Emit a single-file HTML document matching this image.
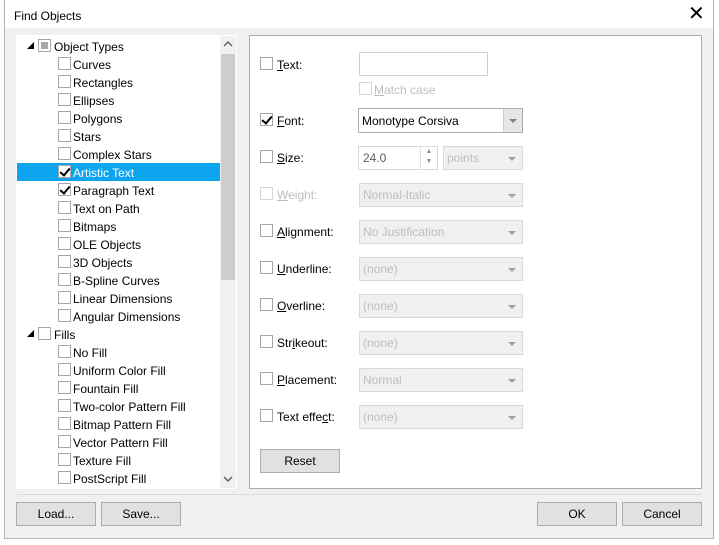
<!DOCTYPE html>
<html><head><style>
*{margin:0;padding:0;box-sizing:border-box}
body{width:719px;height:545px;background:#fff;position:relative;overflow:hidden;font-family:"Liberation Sans",sans-serif;font-size:12px;color:#000}
.a{position:absolute}
.win{left:4px;top:0;width:710px;height:539px;border:1px solid #b4b4b4;border-top:none;background:#f0f0f0}
.title{left:5px;top:0;width:708px;height:28px;background:#fff}
.cb{position:absolute;width:13px;height:13px;border:1px solid #a6a6a6;background:#fff}
.cb.dis{border-color:#d6d6d6}
.ck::after{content:"";position:absolute;left:3px;top:0px;width:4px;height:8px;border:solid #000;border-width:0 2px 2px 0;transform:rotate(40deg)}
.row{position:absolute;left:17px;width:203px;height:18px;line-height:18px;white-space:nowrap}
.row .cb{top:2px}
.row span.t{position:absolute;left:56px;top:1px}
.sel{background:#0ea5ef;color:#fff}
.lbl{position:absolute;white-space:nowrap;line-height:16px}
.dd{position:absolute;left:359px;width:164px;height:24px;border:1px solid #d9d9d9;background:#f0f0f0;color:#bdbdbd;padding-left:3px;line-height:23px}
.dd::after{content:"";position:absolute;right:6px;top:10px;border:4px solid transparent;border-top:4px solid #a0a0a0;border-bottom:0;width:0;height:0}
.btn{position:absolute;height:24px;border:1px solid #adadad;background:#e1e1e1;text-align:center;line-height:23px}
u{text-decoration:underline}
</style></head><body>
<div class="a win"></div>
<div class="a title"></div>
<div class="a" style="left:14px;top:9px">Find Objects</div>
<div class="a" style="left:688px;top:2px;font-size:20px;line-height:24px">✕</div>

<!-- tree -->
<div class="a" style="left:16px;top:35px;width:221px;height:454px;background:#fff"></div>
<div class="a" style="left:220px;top:36px;width:16px;height:452px;background:#f0f0f0"></div>
<div class="a" style="left:221px;top:54px;width:14px;height:226px;background:#cdcdcd"></div>
<svg class="a" style="left:223px;top:40px" width="10" height="8"><path d="M1 6 L5 2 L9 6" fill="none" stroke="#606060" stroke-width="1.5"/></svg>
<svg class="a" style="left:223px;top:475px" width="10" height="8"><path d="M1 2 L5 6 L9 2" fill="none" stroke="#606060" stroke-width="1.5"/></svg>

<div class="row" style="top:37px"><span class="a" style="left:10px;top:5px;border-left:7px solid transparent;border-bottom:7px solid #000;width:0;height:0"></span><span class="cb" style="left:21px"><span class="a" style="left:2px;top:2px;width:7px;height:7px;background:#a8a8a8"></span></span><span class="a" style="left:37px;top:1px">Object Types</span></div>
<div class="row" style="top:55px"><span class="cb" style="left:41px"></span><span class="t">Curves</span></div>
<div class="row" style="top:73px"><span class="cb" style="left:41px"></span><span class="t">Rectangles</span></div>
<div class="row" style="top:91px"><span class="cb" style="left:41px"></span><span class="t">Ellipses</span></div>
<div class="row" style="top:109px"><span class="cb" style="left:41px"></span><span class="t">Polygons</span></div>
<div class="row" style="top:127px"><span class="cb" style="left:41px"></span><span class="t">Stars</span></div>
<div class="row" style="top:145px"><span class="cb" style="left:41px"></span><span class="t">Complex Stars</span></div>
<div class="row sel" style="top:163px"><span class="cb ck" style="left:41px"></span><span class="t">Artistic Text</span></div>
<div class="row" style="top:181px"><span class="cb ck" style="left:41px"></span><span class="t">Paragraph Text</span></div>
<div class="row" style="top:199px"><span class="cb" style="left:41px"></span><span class="t">Text on Path</span></div>
<div class="row" style="top:217px"><span class="cb" style="left:41px"></span><span class="t">Bitmaps</span></div>
<div class="row" style="top:235px"><span class="cb" style="left:41px"></span><span class="t">OLE Objects</span></div>
<div class="row" style="top:253px"><span class="cb" style="left:41px"></span><span class="t">3D Objects</span></div>
<div class="row" style="top:271px"><span class="cb" style="left:41px"></span><span class="t">B-Spline Curves</span></div>
<div class="row" style="top:289px"><span class="cb" style="left:41px"></span><span class="t">Linear Dimensions</span></div>
<div class="row" style="top:307px"><span class="cb" style="left:41px"></span><span class="t">Angular Dimensions</span></div>
<div class="row" style="top:325px"><span class="a" style="left:10px;top:5px;border-left:7px solid transparent;border-bottom:7px solid #000;width:0;height:0"></span><span class="cb" style="left:21px"></span><span class="a" style="left:37px;top:1px">Fills</span></div>
<div class="row" style="top:343px"><span class="cb" style="left:41px"></span><span class="t">No Fill</span></div>
<div class="row" style="top:361px"><span class="cb" style="left:41px"></span><span class="t">Uniform Color Fill</span></div>
<div class="row" style="top:379px"><span class="cb" style="left:41px"></span><span class="t">Fountain Fill</span></div>
<div class="row" style="top:397px"><span class="cb" style="left:41px"></span><span class="t">Two-color Pattern Fill</span></div>
<div class="row" style="top:415px"><span class="cb" style="left:41px"></span><span class="t">Bitmap Pattern Fill</span></div>
<div class="row" style="top:433px"><span class="cb" style="left:41px"></span><span class="t">Vector Pattern Fill</span></div>
<div class="row" style="top:451px"><span class="cb" style="left:41px"></span><span class="t">Texture Fill</span></div>
<div class="row" style="top:469px"><span class="cb" style="left:41px"></span><span class="t">PostScript Fill</span></div>

<!-- right panel -->
<div class="a" style="left:249px;top:35px;width:453px;height:454px;background:#fff;border:1px solid #adadad"></div>

<span class="cb" style="left:260px;top:57px"></span><span class="lbl" style="left:277px;top:57px"><u>T</u>ext:</span>
<div class="a" style="left:359px;top:52px;width:129px;height:24px;border:1px solid #d0d0d0;background:#fff"></div>
<span class="cb dis" style="left:359px;top:82px"></span><span class="lbl" style="left:374px;top:82px;color:#bdbdbd"><u>M</u>atch case</span>

<span class="cb ck" style="left:260px;top:113px"></span><span class="lbl" style="left:277px;top:113px"><u>F</u>ont:</span>
<div class="a" style="left:358px;top:108px;width:165px;height:25px;border:1px solid #adadad;background:#fff;padding-left:3px;line-height:24px">Monotype Corsiva</div>
<div class="a" style="left:503px;top:109px;width:19px;height:23px;background:#e6e6e6;border-left:1px solid #d0d0d0"></div>
<div class="a" style="left:509px;top:119px;border:4px solid transparent;border-top:4px solid #808080;border-bottom:0"></div>

<span class="cb" style="left:260px;top:150px"></span><span class="lbl" style="left:277px;top:150px"><u>S</u>ize:</span>
<div class="a" style="left:358px;top:146px;width:80px;height:24px;border:1px solid #d9d9d9;background:#fff;padding-left:4px;line-height:23px;color:#606060">24.0</div>
<div class="a" style="left:420px;top:147px;width:17px;height:22px;border-left:1px solid #e0e0e0;font-size:7px;color:#909090;text-align:center;line-height:10px">▲<br>▼</div>
<div class="dd" style="left:443px;width:80px;top:146px">points</div>

<span class="cb dis" style="left:260px;top:187px"></span><span class="lbl" style="left:277px;top:187px;color:#bdbdbd"><u>W</u>eight:</span>
<div class="dd" style="top:183px">Normal-Italic</div>

<span class="cb" style="left:260px;top:224px"></span><span class="lbl" style="left:277px;top:224px"><u>A</u>lignment:</span>
<div class="dd" style="top:220px">No Justification</div>
<span class="cb" style="left:260px;top:261px"></span><span class="lbl" style="left:277px;top:261px"><u>U</u>nderline:</span>
<div class="dd" style="top:257px">(none)</div>
<span class="cb" style="left:260px;top:298px"></span><span class="lbl" style="left:277px;top:298px"><u>O</u>verline:</span>
<div class="dd" style="top:294px">(none)</div>
<span class="cb" style="left:260px;top:335px"></span><span class="lbl" style="left:277px;top:335px">Str<u>i</u>keout:</span>
<div class="dd" style="top:331px">(none)</div>
<span class="cb" style="left:260px;top:372px"></span><span class="lbl" style="left:277px;top:372px"><u>P</u>lacement:</span>
<div class="dd" style="top:368px">Normal</div>
<span class="cb" style="left:260px;top:409px"></span><span class="lbl" style="left:277px;top:409px">Text effe<u>c</u>t:</span>
<div class="dd" style="top:405px">(none)</div>

<div class="btn" style="left:260px;top:449px;width:80px">Reset</div>

<div class="a" style="left:17px;top:494px;width:685px;height:1px;background:#dcdcdc"></div>
<div class="btn" style="left:16px;top:502px;width:80px">Load...</div>
<div class="btn" style="left:101px;top:502px;width:80px">Save...</div>
<div class="btn" style="left:537px;top:502px;width:80px">OK</div>
<div class="btn" style="left:622px;top:502px;width:80px">Cancel</div>
</body></html>
